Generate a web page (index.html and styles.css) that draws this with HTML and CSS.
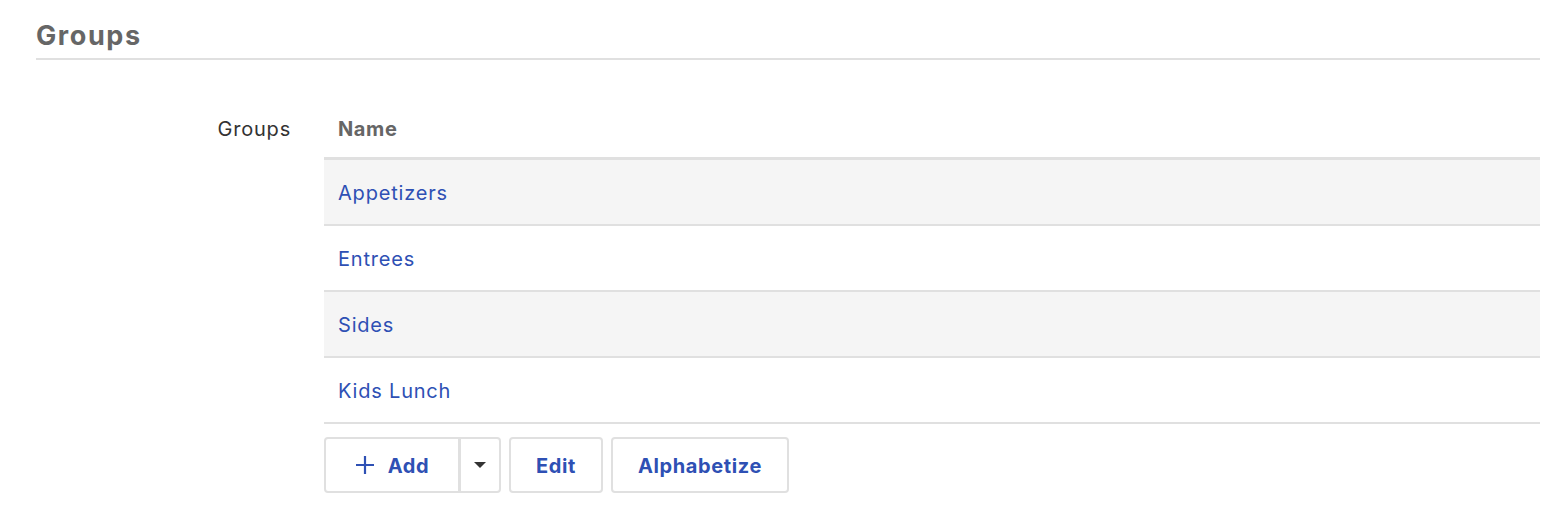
FILE: index.html
```html
<!DOCTYPE html>
<html>
<head>
<meta charset="utf-8">
<link rel="stylesheet" href="styles.css">
</head>
<body>
<div class="page">
  <h2 class="section-title">Groups</h2>
  <div class="form-row">
    <div class="form-label">Groups</div>
    <div class="form-field">
      <table class="groups-table">
        <thead>
          <tr><th>Name</th></tr>
        </thead>
        <tbody>
          <tr class="odd"><td><a href="#">Appetizers</a></td></tr>
          <tr><td><a href="#">Entrees</a></td></tr>
          <tr class="odd"><td><a href="#">Sides</a></td></tr>
          <tr><td><a href="#">Kids Lunch</a></td></tr>
        </tbody>
      </table>
      <div class="actions">
        <div class="split-btn">
          <button class="btn btn-main"><svg class="plus" width="20" height="20" viewBox="0 0 20 20"><path d="M10 1v18M1 10h18" stroke="currentColor" stroke-width="2.2" fill="none"/></svg>Add</button>
          <button class="btn btn-caret"><span class="caret"></span></button>
        </div>
        <button class="btn btn-edit">Edit</button>
        <button class="btn btn-wide">Alphabetize</button>
      </div>
    </div>
  </div>
</div>
</body>
</html>
```

FILE: styles.css
```css
html, body {
  margin: 0;
  padding: 0;
  background: #fff;
}
body {
  font-family: "Inter", "Liberation Sans", sans-serif;
  color: #333;
}
.page {
  padding: 18px 26px 0 36px;
}
.section-title {
  margin: 0;
  font-size: 27px;
  font-weight: 700;
  color: #666;
  line-height: 36px;
  padding-bottom: 4px;
  border-bottom: 2px solid #e0e0e0;
  letter-spacing: 1.6px;
}
.form-row {
  display: flex;
  margin-top: 54px;
}
.form-label {
  width: 255px;
  text-align: right;
  font-size: 20px;
  line-height: 30px;
  color: #333;
  padding-right: 33px;
  letter-spacing: 0.8px;
}
.form-field {
  flex: 1;
}
.groups-table {
  width: 100%;
  border-collapse: collapse;
}
.groups-table th {
  text-align: left;
  font-size: 20px;
  font-weight: 700;
  color: #666;
  padding: 0 14px 13px;
  line-height: 30px;
  border-bottom: 3px solid #e0e0e0;
  letter-spacing: 0.6px;
}
.groups-table td {
  height: 62px;
  padding: 2px 14px 0;
  font-size: 20px;
  border-bottom: 2px solid #e0e0e0;
  letter-spacing: 0.8px;
}
.groups-table tr.odd td {
  background: #f5f5f5;
}
.groups-table a {
  color: #2e50b4;
  text-decoration: none;
}
.actions {
  display: flex;
  gap: 8px;
  margin-top: 13px;
}
.split-btn {
  display: flex;
  border: 2px solid #e0e0e0;
  border-radius: 4px;
}
.btn {
  font-family: inherit;
  font-size: 20px;
  font-weight: 700;
  color: #2e50b4;
  background: #fff;
  border: 2px solid #e0e0e0;
  border-radius: 4px;
  height: 56px;
  padding: 2px 26px 0;
  display: flex;
  align-items: center;
  justify-content: center;
  letter-spacing: 0.6px;
}
.split-btn .btn {
  border: none;
  height: 52px;
  border-radius: 0;
  background: transparent;
}
.btn-main {
  width: 135px;
  gap: 13px;
  padding: 2px 0 0;
  border-right: 3px solid #e0e0e0 !important;
  border-radius: 4px 0 0 4px !important;
}
.plus {
  display: block;
  margin-top: -2px;
}
.btn-caret {
  width: 38px;
  padding: 0 !important;
}
.caret {
  width: 0;
  height: 0;
  border-left: 6px solid transparent;
  border-right: 6px solid transparent;
  border-top: 6px solid #333;
}
.btn-edit {
  width: 94px;
  padding: 2px 0 0;
}
.btn-wide {
  width: 178px;
  padding: 2px 0 0;
}
```
